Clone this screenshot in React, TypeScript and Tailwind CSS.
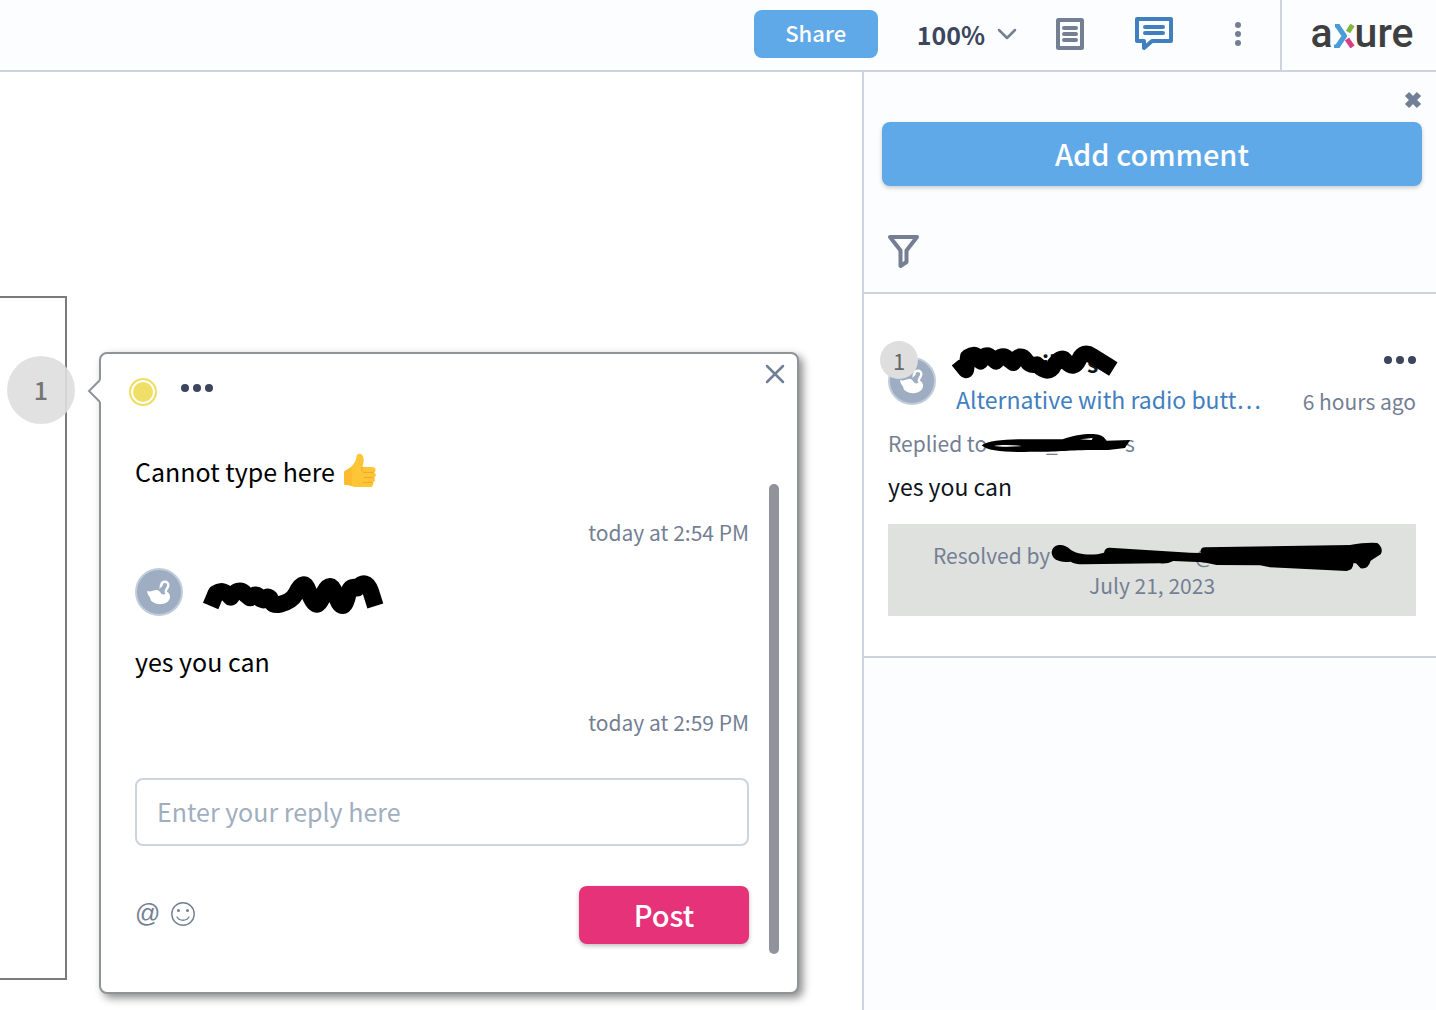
import React from 'react';

const SwanAvatar = () => (
    <span className="flex h-12 w-12 shrink-0 items-center justify-center rounded-full border-2 border-[#c1cddb] bg-[#9eadc1]">
        <svg width="24" height="25" viewBox="0 0 24 25" fill="none" aria-hidden="true">
            <path d="M0 11C4 12.500 7 9.300 10.500 10C13.500 10.700 13.500 15 17 14.500L20.500 12C24.500 15 23.500 20 19.500 22.600C15.500 25 8.500 24.600 5 21.600C3 19.800 4 19 2.600 17C1 15 .4 13.500 0 11Z" fill="#fff" />
            <path d="M14.300 5.200C14.500 .6 21.800 .6 21.300 5.500C20.900 8.500 18.300 9.500 18.800 12L21 15" stroke="#fff" strokeWidth="2.400" strokeLinecap="round" />
            <path d="M12.300 9L12.900 4.500L15.800 5.500Z" fill="#fff" />
        </svg>
    </span>
);

const MoreDots = () => (
    <svg width="32" height="8" viewBox="0 0 32 8" fill="#3c465e" aria-hidden="true">
        <circle cx="4" cy="4" r="4" />
        <circle cx="16" cy="4" r="4" />
        <circle cx="28" cy="4" r="4" />
    </svg>
);

const ThumbsUp = () => (
    <svg width="34" height="36" viewBox="0 0 34 36" role="img" aria-label="thumbs up">
        <path d="M1 20C1 17 5 17 8 14C11 11 13.500 7 13.500 3.500C14 0 18 0 19.500 2.500C21.500 6 20.500 10 19.500 14H29C33.500 14 33.500 18.500 31 19.500C34 21 33 24 31 24.500C33 26 32 29 30 29.500C31 32 29.500 34 26.500 34H14C9 34 7 32 3 32Q1 32 1 30Z" fill="#fec636" />
        <path d="M1 20C1 17 5 17 8 14C10 19 8 27 9 32.800C7 32 5 32 3 32Q1 32 1 30Z" fill="#fdbb2f" />
        <path d="M21 19.500H30.500M21 24.500H30.500M20 29.500H29.500M19.500 14C18 16 18.500 18 21 19.500" stroke="#f0a92e" strokeWidth="1" fill="none" strokeLinecap="round" />
    </svg>
);

const AxureLogo = () => (
    <div className="flex items-center font-[Roboto,sans-serif] text-[41px] leading-[48px] font-medium text-[#3e3f41]" aria-label="axure">
        <span>a</span>
        <svg width="22" height="24" viewBox="0 0 22 24" fill="none" strokeWidth="5" strokeLinejoin="round" className="mt-1.5">
            <path d="M2 1H4L11.500 12L4 23H1" stroke="#4b9cd6" />
            <path d="M15 8L19.500 1" stroke="#83b541" />
            <path d="M14 15L19.500 23" stroke="#d73e86" />
        </svg>
        <span>ure</span>
    </div>
);

const Header = () => (
    <header className="flex h-[72px] border-b-2 border-[#cbd4df] bg-[#fcfdff]">
        <div className="flex flex-1 items-center justify-end pr-[39px] pb-0.5">
            <button className="h-12 w-[124px] rounded-lg bg-[#5fa9e8] pb-1 text-[22px] leading-8 font-medium text-white">Share</button>
            <button className="ml-[39px] flex items-center gap-3 text-[25px] leading-8 font-bold text-[#3c465e]">
                100%
                <svg width="20" height="12" viewBox="0 0 20 12" fill="none" stroke="#747f94" strokeWidth="2.500" strokeLinecap="round" strokeLinejoin="round">
                    <path d="M2 2L10 10L18 2" />
                </svg>
            </button>
            <button className="ml-[39px]" aria-label="Notes">
                <svg width="28" height="32" viewBox="0 0 28 32" fill="none" stroke="#747f94" strokeWidth="4">
                    <rect x="2" y="2" width="24" height="28" rx="0.500" />
                    <path d="M8 10H20M8 16H20M8 22H20" strokeLinecap="round" />
                </svg>
            </button>
            <button className="ml-[51px]" aria-label="Comments">
                <svg width="38" height="34" viewBox="0 0 38 34" fill="none" stroke="#3f80c0" strokeWidth="4" strokeLinejoin="round">
                    <path d="M2 2H36V24H17L9 31V24H2Z" />
                    <path d="M10 10H28M10 16H28" strokeLinecap="round" />
                </svg>
            </button>
            <button className="ml-[62px]" aria-label="More options">
                <svg width="6" height="24" viewBox="0 0 6 24" fill="#747f94">
                    <circle cx="3" cy="3" r="3" />
                    <circle cx="3" cy="12" r="3" />
                    <circle cx="3" cy="21" r="3" />
                </svg>
            </button>
        </div>
        <div className="flex w-[156px] items-center justify-center border-l-2 border-[#cbd4df] pb-1 pl-1.5">
            <AxureLogo />
        </div>
    </header>
);

const CommentPopover = () => (
    <section className="relative mt-14 ml-8 flex h-[642px] w-[700px] shrink-0 flex-col rounded-lg border-2 border-[#909399] bg-white pr-12 pl-[34px] shadow-[4px_4px_8px_rgba(0,0,0,0.45)]">
        <svg className="absolute top-[25px] -left-3.5 h-6 w-3.5" viewBox="0 0 14 24">
            <path d="M14 1L12 1L2 12L12 23L14 23" fill="#fff" />
            <path d="M13 1L2 12L13 23" fill="none" stroke="#909399" strokeWidth="2" />
        </svg>
        <button className="absolute top-[10px] right-3" aria-label="Close">
            <svg width="20" height="20" viewBox="0 0 20 20" stroke="#718096" strokeWidth="2.500" strokeLinecap="round">
                <path d="M2 2L18 18M18 2L2 18" />
            </svg>
        </button>
        <div className="absolute top-[130px] right-[18px] h-[470px] w-[10px] rounded-full bg-[#909399]"></div>

        <div className="-ml-1.5 flex items-center gap-6 pt-6">
            <button className="h-7 w-7 rounded-full border-2 border-[#efdf66] bg-[#efdf66] ring-2 ring-white ring-inset" aria-label="Comment color"></button>
            <button className="pb-2" aria-label="Comment actions"><MoreDots /></button>
        </div>
        <p className="mt-[45px] flex h-10 items-center gap-2 text-[25px] leading-10 text-black">
            Cannot type here
            <ThumbsUp />
        </p>
        <p className="mt-[25px] text-right text-[21px] leading-8 text-[#747f94]">today at 2:54 PM</p>
        <div className="mt-5 flex items-center gap-5">
            <SwanAvatar />
            <svg width="184" height="44" viewBox="249 386 552 132" role="img" aria-label="Redacted name">
                <path d="M272 494L288 456Q310 440 332 468Q355 438 372 454Q378 462 390 470Q410 450 420 472L430 476Q450 455 454 482Q462 493 480 489Q515 480 527 458Q552 405 566 452Q590 525 612 454Q632 415 645 457Q670 530 685 455Q692 430 712 440Q738 410 752 450L766 494" fill="none" stroke="#000" strokeWidth="50" strokeLinejoin="round" />
            </svg>
        </div>
        <p className="mt-[25px] text-[25px] leading-10 text-black">yes you can</p>
        <p className="mt-[25px] text-right text-[21px] leading-8 text-[#747f94]">today at 2:59 PM</p>
        <input
            type="text"
            aria-label="Reply"
            placeholder="Enter your reply here"
            className="mt-10 h-[68px] w-full rounded-lg border-2 border-[#cbd4df] bg-white px-5 pb-0.5 text-[25px] leading-10 text-black placeholder:text-[#a0aec0]"
        />
        <div className="mt-10 flex items-center">
            <button className="h-9 w-6 pb-1 font-['Liberation_Sans',sans-serif] text-[25px] leading-8 text-[#747f94]" aria-label="Mention someone">@</button>
            <button className="ml-3 pb-0.5" aria-label="Add emoji">
                <svg width="24" height="24" viewBox="0 0 24 24" fill="none" stroke="#747f94" strokeWidth="1.400">
                    <circle cx="12" cy="12" r="11.200" />
                    <path d="M6 15C8.500 19.300 15.500 19.300 18 15" strokeLinecap="round" />
                    <circle cx="7.500" cy="8.500" r="1.500" fill="#747f94" stroke="none" />
                    <circle cx="16.500" cy="8.500" r="1.500" fill="#747f94" stroke="none" />
                </svg>
            </button>
            <button className="ml-auto h-[58px] w-[170px] rounded-lg bg-[#e63278] pb-0.5 text-[29px] leading-10 font-medium text-white shadow-[0_2px_4px_rgba(0,0,0,0.25)]">Post</button>
        </div>
    </section>
);

const CommentCard = () => (
    <article className="border-b-2 border-[#cbd4df] bg-white pt-12 pr-5 pb-10 pl-6">
        <div className="flex">
            <div className="relative mt-[15px] h-12 w-12 shrink-0">
                <SwanAvatar />
                <span className="absolute -top-4 -left-2 flex h-[38px] w-[38px] items-center justify-center rounded-full bg-[#dedede] text-[22px] leading-8 text-[#666]">1</span>
            </div>
            <div className="ml-4 min-w-0 flex-1">
                <div className="flex h-9 items-center justify-between">
                    <div className="relative text-[23px] leading-9 font-bold text-[#0e1320]">
                        <span className="absolute top-1 left-[90px]">il</span>
                        <span className="absolute top-1 left-[135px]">s</span>
                        <svg className="relative" width="168" height="38" viewBox="240 36 504 114" role="img" aria-label="Redacted name">
                            <path d="M258 94L282 124L288 84Q315 66 326 98Q340 66 360 88L372 98Q390 70 408 90L424 102Q445 66 464 96Q475 112 495 106Q530 144 548 106Q570 76 582 98Q606 126 622 90Q635 64 660 80L724 120" fill="none" stroke="#000" strokeWidth="48" strokeLinejoin="round" />
                        </svg>
                    </div>
                    <button aria-label="Comment actions"><MoreDots /></button>
                </div>
                <div className="flex h-[42px] items-center justify-between pl-1">
                    <a href="#" className="text-[23px] leading-9 text-[#3f80c0]">Alternative with radio butt…</a>
                    <time className="pt-1 text-[21px] leading-9 text-[#747f94]">6 hours ago</time>
                </div>
            </div>
        </div>
        <p className="relative mt-[5px] text-[21px] leading-9 text-[#747f94]">
            Replied to
            <span className="absolute top-0 left-[158px]">_</span>
            <span className="absolute top-0 left-[237px]">s</span>
            <svg className="absolute top-[7px] left-[92px]" width="152" height="24" viewBox="330 308 456 72" role="img" aria-label="Redacted name">
                <path d="M335 348C370 325 470 330 578 330C630 312 690 308 703 326L710 334L780 332L765 356L715 362C590 360 580 368 480 367C410 370 350 365 335 348Z" />
                <path d="M372 350C390 346 430 347 456 350C430 353 390 353 372 350Z" fill="#fff" />
                <path d="M630 330L668 326L665 332Z" fill="#fff" />
            </svg>
        </p>
        <p className="mt-[7px] text-[23px] leading-9 text-[#0e1320]">yes you can</p>
        <div className="mt-5 h-[92px] bg-[#dfe1df] px-[45px] pt-4 text-[21px] leading-[30px] text-[#747f94]">
            <p className="relative">
                Resolved by
                <span className="absolute top-0 left-[262px]">@</span>
                <svg className="absolute top-0 left-[117px]" width="336" height="34" viewBox="30 60 1008 102" role="img" aria-label="Redacted email">
                    <path d="M35 100C35 68 75 70 90 88C110 105 160 108 192 98Q195 82 210 83L450 98L482 99Q480 82 495 82L930 75Q980 66 1012 69Q1032 85 1022 103L992 122Q985 148 962 145L948 130H940Q940 150 920 153L690 142L660 136L530 135L490 127L400 123Q380 133 360 130L130 133Q105 133 92 125Q40 130 35 100Z" />
                </svg>
            </p>
            <p className="text-center">July 21, 2023</p>
        </div>
    </article>
);

const CommentsPanel = () => (
    <aside className="w-[574px] shrink-0 border-l-2 border-[#cbd4df] bg-[#fcfdff]">
        <div className="flex flex-col border-b-2 border-[#cbd4df] pt-[18px] pr-[14px] pb-6 pl-[18px]">
            <button className="self-end" aria-label="Close comments">
                <svg width="18" height="20" viewBox="0 0 18 20" stroke="#718096" strokeWidth="6">
                    <path d="M3 4L15 16M15 4L3 16" />
                </svg>
            </button>
            <button className="mt-3 h-16 rounded-lg bg-[#5fa9e8] pb-0.5 text-[29px] leading-10 font-medium text-white shadow-[0_2px_4px_rgba(0,0,0,0.2)]">Add comment</button>
            <button className="mt-12 ml-1.5 self-start" aria-label="Filter comments">
                <svg width="32" height="34" viewBox="0 0 32 34" fill="none" stroke="#747f94" strokeWidth="4" strokeLinejoin="round">
                    <path d="M2 3H29L18.500 16.500V28L12.500 32V16.500Z" />
                </svg>
            </button>
        </div>
        <CommentCard />
    </aside>
);

export default function App() {
    return (
        <div className="flex min-h-screen flex-col bg-white font-['Noto_Sans_CJK_SC','Noto_Sans',sans-serif]">
            <Header />
            <div className="flex flex-1">
                <main className="relative flex min-w-0 flex-1 items-start overflow-hidden pt-[224px]">
                    <div className="h-[684px] w-[67px] shrink-0 border-y-2 border-r-2 border-[#7b7b7b]"></div>
                    {/* Comment pin sits on the edge of the widget */}
                    <button className="absolute top-[284px] left-[7px] h-[68px] w-[68px] rounded-full bg-[#dedede]/90 text-[25px] font-medium text-[#747474]">1</button>
                    <CommentPopover />
                </main>
                <CommentsPanel />
            </div>
        </div>
    );
}
